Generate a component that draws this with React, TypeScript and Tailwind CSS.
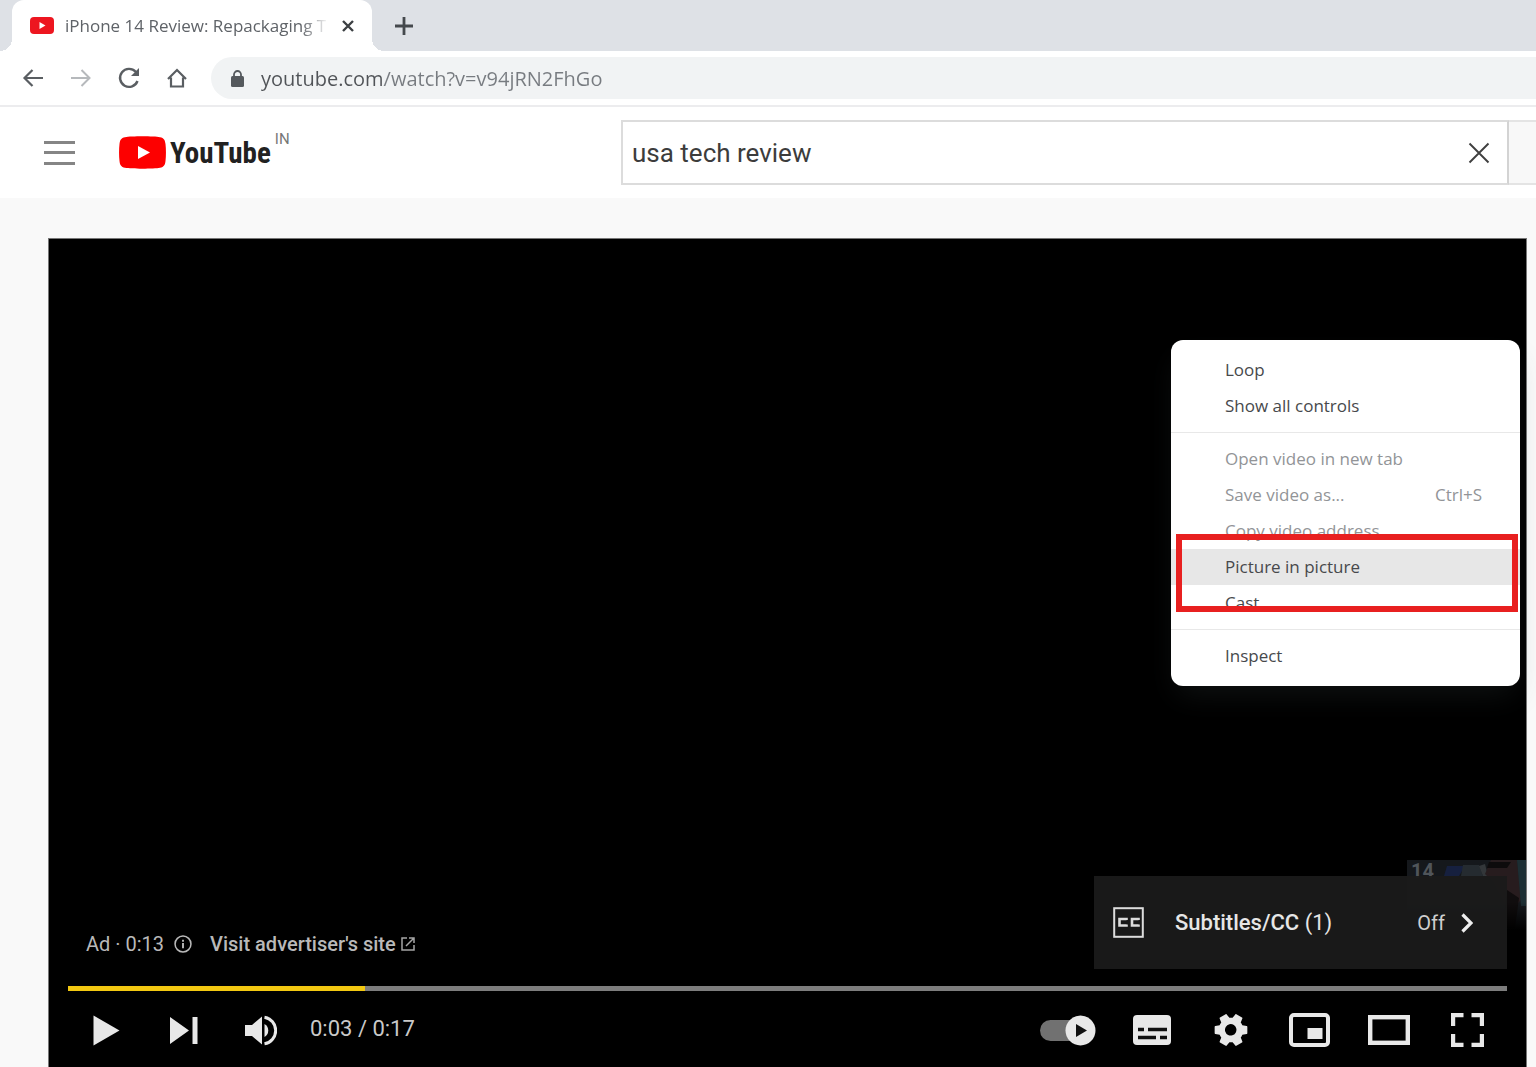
import { useState } from "react";

const segoe = "font-['Open_Sans','Noto_Sans',sans-serif]";

export default function App() {
  return (
    <div className="min-h-screen flex flex-col bg-[#f9f9f9] overflow-hidden font-['Roboto',sans-serif]">
      <TabStrip />
      <Toolbar />
      <Masthead />
      <main className="flex-1 flex pt-10 pl-12 pr-[9px]">
        <Player />
      </main>
    </div>
  );
}

function TabStrip() {
  return (
    <div className="h-[51px] bg-[#dee1e6] flex items-stretch pl-3">
      <div className="w-[360px] bg-white rounded-t-xl flex items-center pl-[18px] pr-3 relative">
        {/* Curved feet of the active tab */}
        <span className="absolute bottom-0 -left-3 size-3 bg-[radial-gradient(circle_at_0_0,#dee1e6_12px,#fff_12px)]" />
        <span className="absolute bottom-0 -right-3 size-3 bg-[radial-gradient(circle_at_100%_0,#dee1e6_12px,#fff_12px)]" />
        <svg className="w-6 h-[17px] shrink-0" viewBox="0 0 24 17">
          <rect width="24" height="17" rx="4" fill="#ed1620" />
          <path d="M9.5 5v7l6-3.500z" fill="#fff" />
        </svg>
        <span className="ml-[11px] flex-1 min-w-0 overflow-hidden whitespace-nowrap text-[17px] leading-6 text-[#5f6368] font-['Open_Sans','Noto_Sans',sans-serif] mask-r-from-[236px] mask-r-to-[264px]">
          iPhone 14 Review: Repackaging T
        </span>
        <button aria-label="Close tab" className="ml-2 size-6 flex items-center justify-center shrink-0">
          <svg className="size-3" viewBox="0 0 12 12" fill="none" stroke="#3c4043" strokeWidth="2.400">
            <path d="M1 1l10 10M11 1L1 11" />
          </svg>
        </button>
      </div>
      <button aria-label="New tab" className="ml-5 w-6 flex items-center justify-center">
        <svg className="size-[18px]" viewBox="0 0 18 18" fill="none" stroke="#45494d" strokeWidth="2.800">
          <path d="M9 0v18M0 9h18" />
        </svg>
      </button>
    </div>
  );
}

function Toolbar() {
  const [url, setUrl] = useState("youtube.com/watch?v=v94jRN2FhGo");
  return (
    <div className="h-14 bg-white border-b-2 border-[#ececee] flex items-center pl-[21px]">
      <div className="flex gap-6 mr-[22px]">
        <button aria-label="Back" className="size-6">
          <svg viewBox="0 0 24 24" fill="none" stroke="#5a5e62" strokeWidth="2.200">
            <path d="M22 12H3.500M11.500 4L3.500 12l8 8" />
          </svg>
        </button>
        <button aria-label="Forward" className="size-6">
          <svg viewBox="0 0 24 24" fill="none" stroke="#b6b9bc" strokeWidth="2">
            <path d="M2 12h18.500M12.500 4l8 8-8 8" />
          </svg>
        </button>
        <button aria-label="Reload" className="size-6">
          <svg viewBox="0 0 24 24" fill="none" stroke="#5a5e62" strokeWidth="2.400">
            <path d="M20.500 15a9 9 0 1 1-1.800-9.200L21 8" />
            <path d="M22 2v8h-8z" fill="#5a5e62" stroke="none" />
          </svg>
        </button>
        <button aria-label="Home" className="size-6">
          <svg viewBox="0 0 24 24" fill="none" stroke="#5a5e62" strokeWidth="2.200">
            <path d="M3 13L12 4l9 9M6 11.500V20.500h12V11.500" />
          </svg>
        </button>
      </div>
      <div className="flex-1 h-[42px] rounded-l-full bg-[#f1f3f4] flex items-center pl-5">
        <svg className="w-[13px] h-[18px] shrink-0" viewBox="0 0 13 18">
          <rect y="7" width="13" height="11" rx="1.500" fill="#55595d" />
          <path d="M3 8V5.500a3.500 3.500 0 0 1 7 0V8" fill="none" stroke="#55595d" strokeWidth="1.800" />
        </svg>
        {/* Host part is darker than the path */}
        <input
          aria-label="Address"
          className={`ml-[17px] flex-1 min-w-0 pt-px text-[20px] leading-7 outline-none text-transparent bg-clip-text bg-linear-to-r from-[#505357] from-[123px] to-[#777b80] to-[123px] ${segoe}`}
          value={url}
          onChange={(e) => setUrl(e.target.value)}
        />
      </div>
    </div>
  );
}

function Masthead() {
  const [query, setQuery] = useState("usa tech review");
  return (
    <header className="h-[91px] bg-white flex items-center">
      <div className="w-[621px] shrink-0 flex items-center pl-11">
        <button aria-label="Guide" className="w-[31px] h-6 flex flex-col justify-between">
          <span className="w-full h-[3px] bg-[#858585]" />
          <span className="w-full h-[3px] bg-[#858585]" />
          <span className="w-full h-[3px] bg-[#858585]" />
        </button>
        <a href="#" aria-label="YouTube Home" className="ml-11 flex items-center">
          <svg className="w-[47px] h-[33px]" viewBox="0 0 47 33">
            <path
              d="M6 1.200C12 0 35 0 41 1.200 45 2 46 4 46.500 8c.6 5 .6 12 0 17-.5 4-1.500 6-5.500 6.800-6 1.200-29 1.200-35 0C2 31 1 29 .5 25c-.6-5-.6-12 0-17C1 4 2 2 6 1.200z"
              fill="#fd0000"
            />
            <path d="M19 10v13l12-6.500z" fill="#fff" />
          </svg>
          <span className="ml-1 text-[29px] leading-9 font-bold text-[#212121] font-['Liberation_Sans_Narrow','Roboto_Condensed','Roboto',sans-serif]">
            YouTube
          </span>
          <span className="self-start ml-1 -mt-1 text-[15px] leading-4 text-[#777]">IN</span>
        </a>
      </div>
      <form className="flex-1 flex h-[65px]" onSubmit={(e) => e.preventDefault()}>
        <div className="flex-1 border-2 border-[#dcdcdc] border-r-[#d3d3d3] bg-white flex items-center pl-[9px] pr-4">
          <input
            aria-label="Search"
            className="flex-1 min-w-0 text-[26px] leading-8 text-[#3c3c3c] outline-none"
            value={query}
            onChange={(e) => setQuery(e.target.value)}
          />
          <button type="button" aria-label="Clear" onClick={() => setQuery("")} className="size-6">
            <svg viewBox="0 0 24 24" fill="none" stroke="#3f3f3f" strokeWidth="1.900">
              <path d="M2.500 2.500l19 19M21.500 2.500l-19 19" />
            </svg>
          </button>
        </div>
        <button aria-label="Submit search" className="w-[27px] border-y-2 border-[#e4e4e4] bg-[#f8f8f8]" />
      </form>
    </header>
  );
}

function Player() {
  return (
    <section className="flex-1 bg-black border-t border-l border-r border-[#777] text-[#ddd] flex flex-col justify-end px-[19px] relative">
      <EndCard />
      <SubtitlesPanel />
      <ContextMenu />

      {/* Ad info */}
      <div className="flex items-center pl-[18px] text-[20px] leading-6 text-[#b9b9b9]">
        <span>Ad · 0:13</span>
        <svg className="size-[18px] ml-[10px]" viewBox="0 0 19 19" fill="none" stroke="#b9b9b9" strokeWidth="1.600">
          <circle cx="9.500" cy="9.500" r="8.400" />
          <path d="M9.500 8.500V14M9.500 5v2" strokeWidth="2" />
        </svg>
        <a href="#" className="ml-[18px] flex items-center font-medium">
          Visit advertiser's site
          <svg className="size-[14px] ml-[5px]" viewBox="0 0 14 14" fill="none" stroke="#a5a5a5" strokeWidth="1.500">
            <path d="M6 1H1v12h12V8M8 1h5v5M13 1L5 9" />
          </svg>
        </a>
      </div>

      {/* Progress */}
      <div className="h-[5px] mt-[30px] bg-[#7d7d7d]">
        <div className="h-full w-[297px] bg-[#f2c811]" />
      </div>

      <div className="h-[76px] pt-[2px] flex items-center justify-between">
        <div className="flex items-center">
          <Control label="Play" size="w-[77px]">
            <svg className="w-[27px] h-[31px]" viewBox="0 0 27 31">
              <path d="M.5.5v30l26-15z" />
            </svg>
          </Control>
          <Control label="Next" size="w-[77px]">
            <svg className="w-7 h-[27px]" viewBox="0 0 28 27">
              <path d="M0 0v27l19-13.500zM22.500 0h5v27h-5z" />
            </svg>
          </Control>
          <Control label="Mute" size="w-[77px]">
            <svg className="w-8 h-[31px]" viewBox="0 0 32 31">
              <path d="M0 10v11h7l10 8.500V1.500L7 10z" />
              <path d="M19.500 9v13a7.500 7.500 0 0 0 0-13z" />
              <path d="M19.500 2.200a13.500 13.500 0 0 1 0 26.600" fill="none" stroke="#e8e8e8" strokeWidth="3" />
            </svg>
          </Control>
          <span className="ml-[11px] pb-[2px] text-[22px] leading-6 text-[#c9c9c9]">0:03 / 0:17</span>
        </div>
        <div className="flex items-center">
          <Control label="Autoplay" size="w-[88px]">
            <svg className="w-14 h-[31px]" viewBox="0 0 56 31">
              <rect x="0" y="5" width="40" height="21" rx="10.500" fill="#717171" />
              <circle cx="40.500" cy="15.500" r="15" />
              <path d="M36 9v13l11-6.500z" fill="#111" />
            </svg>
          </Control>
          <Control label="Subtitles" size="w-[79px]">
            <svg className="w-[38px] h-[30px]" viewBox="0 0 38 30">
              <rect width="38" height="30" rx="4" />
              <path d="M5 14.500h6M15 14.500h19M5 22.500h18M27 22.500h7" stroke="#111" strokeWidth="3.500" />
            </svg>
          </Control>
          <Control label="Settings" size="w-[79px]">
            <svg className="size-[34px]" viewBox="9.700 9.700 16.600 16.600">
              <path
                transform="rotate(30 18 18)"
                d="m23.940 18.780c.03-.25.05-.51.05-.78 0-.27-.02-.52-.05-.78l1.680-1.320c.15-.12.19-.33.09-.51l-1.600-2.760c-.09-.17-.31-.24-.48-.17l-1.990.8c-.41-.32-.86-.58-1.350-.78l-.3-2.120c-.02-.19-.19-.33-.39-.33h-3.200c-.2 0-.36.14-.39.33l-.3 2.120c-.48.2-.93.47-1.350.78l-1.990-.8c-.18-.07-.39 0-.48.17l-1.600 2.760c-.1.17-.05.39.09.51l1.680 1.320c-.03.25-.05.52-.05.78s.02.52.05.78l-1.680 1.320c-.15.12-.19.33-.09.51l1.600 2.760c.09.17.31.24.48.17l1.990-.8c.41.32.86.58 1.350.78l.3 2.120c.02.19.19.33.39.33h3.200c.2 0 .36-.14.39-.33l.3-2.120c.48-.2.93-.47 1.350-.78l1.990.8c.18.07.39 0 .48-.17l1.600-2.760c.09-.17.05-.39-.09-.51l-1.680-1.320zm-5.940 2.010a2.800 2.800 0 1 1 0-5.590 2.800 2.800 0 0 1 0 5.590z"
              />
            </svg>
          </Control>
          <Control label="Miniplayer" size="w-[79px]">
            <svg className="w-[41px] h-[34px]" viewBox="0 0 41 34">
              <rect x="2" y="2" width="37" height="30" rx="3" fill="none" stroke="#e8e8e8" strokeWidth="4" />
              <path d="M18.500 15h15v11h-15z" />
            </svg>
          </Control>
          <Control label="Theater mode" size="w-[79px]">
            <svg className="w-[42px] h-[30px]" viewBox="0 0 42 30">
              <rect x="2.200" y="2.200" width="37.600" height="25.600" fill="none" stroke="#e8e8e8" strokeWidth="4.400" />
            </svg>
          </Control>
          <Control label="Full screen" size="w-[79px]">
            <svg className="w-[33px] h-[34px]" viewBox="0 0 33 34" fill="none" stroke="#e8e8e8" strokeWidth="4.200">
              <path d="M2.100 13V2.100H12.500M20.500 2.100H30.900V13M30.900 21V31.900H20.500M12.500 31.900H2.100V21" />
            </svg>
          </Control>
        </div>
      </div>
    </section>
  );
}

function Control({ label, size, children }: { label: string; size: string; children: React.ReactNode }) {
  return (
    <button aria-label={label} className={`${size} h-12 flex items-center justify-center fill-[#e8e8e8]`}>
      {children}
    </button>
  );
}

/* Dimmed thumbnail peeking out from behind the subtitles panel */
function EndCard() {
  return (
    <svg className="absolute right-0 bottom-[137px] w-[119px] h-[70px]" viewBox="0 0 119 70">
      <defs>
        <linearGradient id="fade" x1="0" y1="0" x2="0" y2="1">
          <stop offset="0.600" stopColor="#000" stopOpacity="0" />
          <stop offset="1" stopColor="#000" />
        </linearGradient>
      </defs>
      <rect width="119" height="70" fill="#15181c" />
      <text x="4" y="18" fontSize="20" fontWeight="700" fill="#50555a" fontFamily="Roboto">14</text>
      <path d="M40 6h18l-6 10H37z" fill="#16203f" />
      <path d="M56 5h16l4 11H54z" fill="#252b30" />
      <path d="M72 6l6-2 3 12h-5z" fill="#33373a" />
      <path d="M84 0h26l4 40-12 12-16-30-8-8z" fill="#271c1e" />
      <path d="M82 2h22l-4 6H80z" fill="#0d0b0c" />
      <path d="M110 0h9v46h-5z" fill="#1c2e33" />
      <path d="M100 30l12 8-4 30H96z" fill="#100d0e" />
      <rect width="119" height="70" fill="url(#fade)" />
    </svg>
  );
}

function SubtitlesPanel() {
  return (
    <button className="absolute right-[19px] bottom-[98px] w-[413px] h-[93px] bg-[#1a1a1a]/95 flex items-center pl-[19px] pr-[34px] text-[#e6e6e6]">
      <svg className="size-[31px] shrink-0" viewBox="0 0 31 31" fill="none" stroke="#dcdcdc">
        <rect x="1.200" y="1.200" width="28.600" height="28.600" strokeWidth="2" />
        <path d="M13.500 13V12H6.500v6.500h7v-1M25.500 13V12h-6.500v6.500h6.500v-1" strokeWidth="2.600" />
      </svg>
      <span className="ml-[31px] flex-1 text-left text-[22px] leading-6 font-medium">
        Subtitles/CC <span className="font-normal">(1)</span>
      </span>
      <span className="text-[20px] leading-6 text-[#cfcfcf]">Off</span>
      <svg className="w-3 h-5 ml-4" viewBox="0 0 12 20" fill="none" stroke="#eee" strokeWidth="3.200">
        <path d="M1.500 1.500L10 10l-8.500 8.500" />
      </svg>
    </button>
  );
}

function ContextMenu() {
  return (
    <div
      role="menu"
      className={`absolute top-[101px] right-[6px] w-[349px] py-3 bg-white rounded-xl text-[17px] leading-5 shadow-[0_14px_30px_-6px_rgba(70,80,80,0.22)] ${segoe}`}
    >
      <MenuItem label="Loop" />
      <MenuItem label="Show all controls" />
      <hr className="my-2 border-[#e8e8e8]" />
      <MenuItem label="Open video in new tab" disabled />
      <MenuItem label="Save video as..." shortcut="Ctrl+S" disabled />
      <MenuItem label="Copy video address" disabled />
      <MenuItem label="Picture in picture" active />
      <MenuItem label="Cast" />
      <hr className="my-2 border-[#e8e8e8]" />
      <MenuItem label="Inspect" />
      {/* Highlight frame */}
      <div className="absolute top-[194px] left-[5px] right-[2px] h-[78px] border-6 border-[#e82020] pointer-events-none" />
    </div>
  );
}

function MenuItem({
  label,
  shortcut,
  disabled,
  active,
}: {
  label: string;
  shortcut?: string;
  disabled?: boolean;
  active?: boolean;
}) {
  return (
    <button
      role="menuitem"
      disabled={disabled}
      className={`w-full h-9 flex items-center justify-between pl-[54px] pr-[38px] text-[#47494c] disabled:text-[#929497] ${active ? "bg-[#e7e7e7]" : ""}`}
    >
      <span>{label}</span>
      {shortcut && <span>{shortcut}</span>}
    </button>
  );
}
